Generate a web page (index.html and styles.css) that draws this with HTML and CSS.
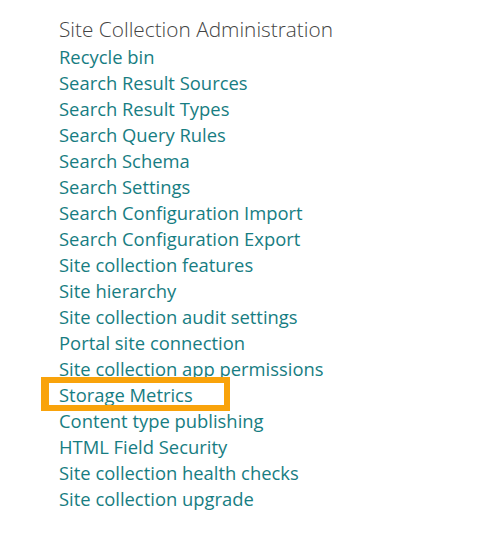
FILE: index.html
```html
<!DOCTYPE html>
<html lang="en">
<head>
<meta charset="utf-8">
<title>Site Collection Administration</title>
<link rel="stylesheet" href="styles.css">
</head>
<body>
<div class="panel">
  <h2 class="title">Site Collection Administration</h2>
  <ul class="links">
    <li><a href="#">Recycle bin</a></li>
    <li><a href="#">Search Result Sources</a></li>
    <li><a href="#">Search Result Types</a></li>
    <li><a href="#">Search Query Rules</a></li>
    <li><a href="#">Search Schema</a></li>
    <li><a href="#">Search Settings</a></li>
    <li><a href="#">Search Configuration Import</a></li>
    <li><a href="#">Search Configuration Export</a></li>
    <li><a href="#">Site collection features</a></li>
    <li><a href="#">Site hierarchy</a></li>
    <li><a href="#">Site collection audit settings</a></li>
    <li><a href="#">Portal site connection</a></li>
    <li><a href="#">Site collection app permissions</a></li>
    <li class="highlight"><a href="#">Storage Metrics</a></li>
    <li><a href="#">Content type publishing</a></li>
    <li><a href="#">HTML Field Security</a></li>
    <li><a href="#">Site collection health checks</a></li>
    <li><a href="#">Site collection upgrade</a></li>
  </ul>
</div>
</body>
</html>
```
FILE: styles.css
```css
html, body {
  margin: 0;
  padding: 0;
  background: #ffffff;
}

.panel {
  padding: 14px 0 0 59px;
}

.title {
  margin: 0;
  font-family: "Open Sans", "Noto Sans", sans-serif;
  font-weight: 300;
  font-size: 20.8px;
  line-height: 30px;
  color: #444444;
}

.links {
  list-style: none;
  margin: 0;
  padding: 0;
}

.links li {
  font-family: "Open Sans", "Noto Sans", sans-serif;
  font-size: 18.4px;
  line-height: 26px;
}

.links a {
  color: #177d82;
  text-decoration: none;
}

.highlight {
  position: relative;
}

.highlight::after {
  content: "";
  position: absolute;
  left: -18px;
  top: -5px;
  width: 175px;
  height: 22px;
  border: 6px solid #f9a30b;
  border-left-width: 8px;
  pointer-events: none;
}
```
